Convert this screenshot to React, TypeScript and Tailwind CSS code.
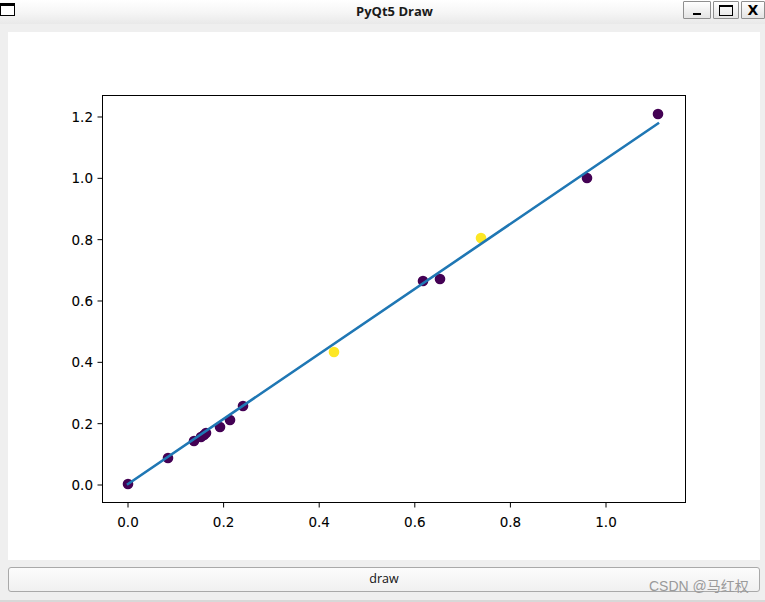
import React from "react";

const X0 = 128;
const XS = 478;
const Y0 = 485;
const YS = 306.67;
const px = (v: number) => X0 + v * XS;
const py = (v: number) => Y0 - v * YS;

const points: { x: number; y: number; c: string }[] = [
  { x: 128, y: 484, c: "#440154" },
  { x: 168, y: 458, c: "#440154" },
  { x: 194, y: 441, c: "#440154" },
  { x: 201, y: 437, c: "#440154" },
  { x: 204, y: 435, c: "#440154" },
  { x: 206, y: 433, c: "#440154" },
  { x: 220, y: 427, c: "#440154" },
  { x: 230, y: 420, c: "#440154" },
  { x: 243, y: 406, c: "#440154" },
  { x: 334, y: 352, c: "#fde725" },
  { x: 423, y: 281, c: "#440154" },
  { x: 440, y: 279, c: "#440154" },
  { x: 481, y: 238, c: "#fde725" },
  { x: 587, y: 178, c: "#440154" },
  { x: 658, y: 114, c: "#440154" },
];

const xticks = [0, 0.2, 0.4, 0.6, 0.8, 1.0];
const yticks = [0, 0.2, 0.4, 0.6, 0.8, 1.0, 1.2];

function Plot() {
  return (
    <svg width="752" height="528" viewBox="8 32 752 528" className="block">
      <rect x="8" y="32" width="752" height="528" fill="#ffffff" />
      <g fontFamily="'DejaVu Sans', sans-serif" fontSize="13.5" fill="#000" stroke="#000" strokeWidth="0.08">
        {xticks.map((t) => (
          <g key={"x" + t}>
            <line x1={px(t)} x2={px(t)} y1={502.5} y2={507.5} stroke="#000" strokeWidth="1" />
            <text x={px(t)} y={527} textAnchor="middle">
              {t.toFixed(1)}
            </text>
          </g>
        ))}
        {yticks.map((t) => (
          <g key={"y" + t}>
            <line x1={97.5} x2={102.5} y1={py(t)} y2={py(t)} stroke="#000" strokeWidth="1" />
            <text x={93} y={py(t) + 5} textAnchor="end">
              {t.toFixed(1)}
            </text>
          </g>
        ))}
      </g>
      {points.map((p, i) => (
        <circle key={i} cx={p.x} cy={p.y} r="5.3" fill={p.c} />
      ))}
      <line x1={128} y1={484} x2={658} y2={123.5} stroke="#1f77b4" strokeWidth="2.6" strokeLinecap="square" />
      <rect x="102.5" y="95.5" width="583" height="407" fill="none" stroke="#000" strokeWidth="1" />
    </svg>
  );
}

function TitleButton({ children, w }: { children: React.ReactNode; w: string }) {
  return (
    <div
      className={`${w} h-[18px] flex items-center justify-center border border-[#8f8f8f] rounded-[1px] bg-gradient-to-b from-[#ffffff] to-[#e4e4e4]`}
    >
      {children}
    </div>
  );
}

export default function App() {
  return (
    <div className="w-[765px] h-[602px] bg-[#efefef] flex flex-col overflow-hidden relative" style={{ fontFamily: "'Open Sans', 'Noto Sans', sans-serif" }}>
      {/* title bar */}
      <div className="h-[24px] flex items-start bg-gradient-to-b from-[#ffffff] via-[#f6f6f6] to-[#e9e9e9] relative">
        <div className="mt-[3px] w-[15px] h-[13px] border-[1.5px] border-t-[3px] border-black bg-white" />
        <div className="absolute left-[24px] right-0 top-[0px] text-center text-[13px] font-bold text-[#1a1a1a] leading-[22px]">
          PyQt5 Draw
        </div>
        <div className="ml-auto mt-[1px] flex gap-[2px]">
          <TitleButton w="w-[28px]">
            <div className="w-[8px] h-[2px] bg-black mt-[8px]" />
          </TitleButton>
          <TitleButton w="w-[26px]">
            <div className="w-[14px] h-[11px] border border-t-[2px] border-black" />
          </TitleButton>
          <TitleButton w="w-[24px]">
            <span className="text-[14px] font-bold leading-none text-black" style={{ fontFamily: "'DejaVu Sans', sans-serif" }}>
              X
            </span>
          </TitleButton>
        </div>
      </div>
      {/* body */}
      <div className="pl-[8px] pr-[5px] pt-[8px] flex flex-col">
        <div className="h-[528px] bg-white">
          <Plot />
        </div>
        <button className="mt-[7px] h-[25px] w-full rounded-[3px] border border-[#a9a9a9] bg-gradient-to-b from-[#fcfcfc] to-[#f0f0f0] text-[12.5px] text-[#111] flex items-center justify-center">
          draw
        </button>
      </div>
      <div className="absolute right-0 left-0 bottom-0 h-[2px] bg-[#d8d8d8]" />
      <div
        className="absolute left-[649px] top-[576px] text-[14px] text-[#9a9a9a] whitespace-nowrap"
        style={{ fontFamily: "'Liberation Sans', 'Noto Sans CJK SC', sans-serif" }}
      >
        CSDN @马红权
      </div>
    </div>
  );
}
